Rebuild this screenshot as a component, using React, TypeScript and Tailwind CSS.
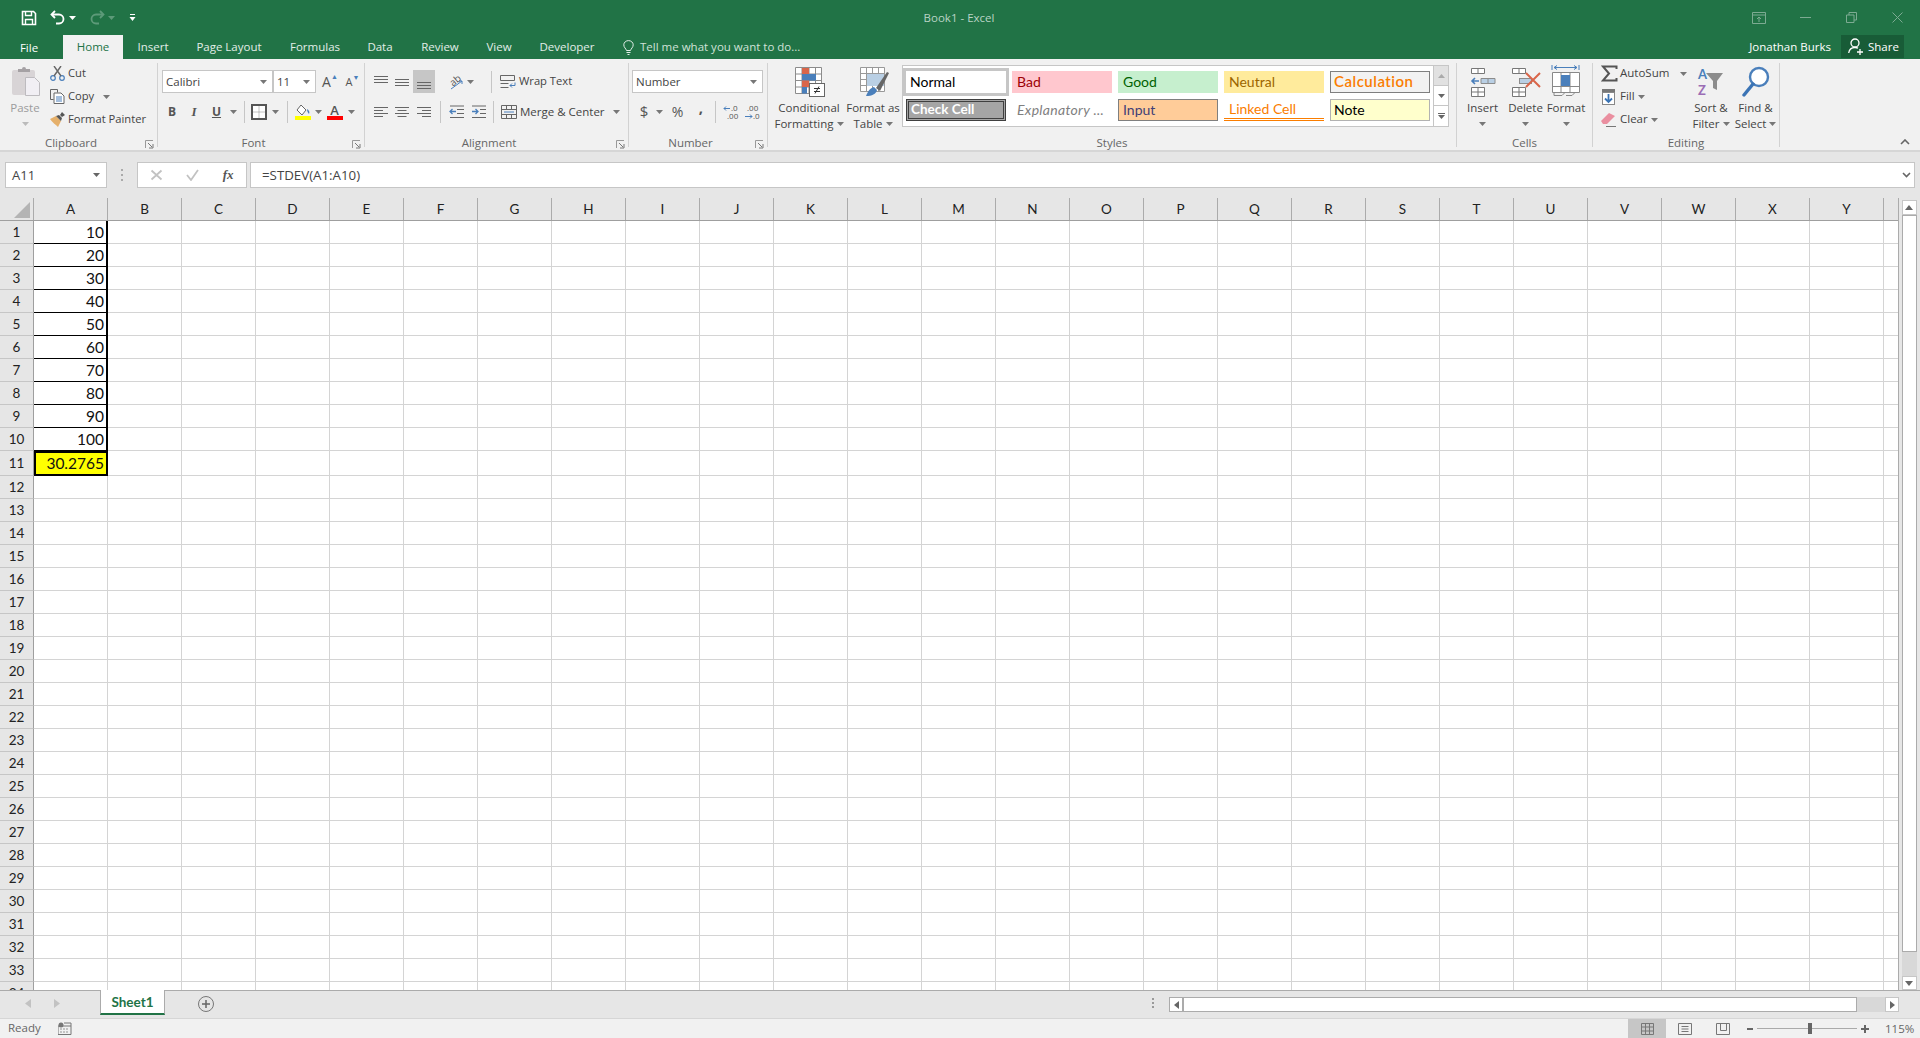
import React from "react";

const Caret = ({ c = "#777" }: { c?: string }) => (
  <svg width="7" height="4" viewBox="0 0 7 4" className="shrink-0"><path d="M0 0h7L3.5 4z" fill={c} /></svg>
);

const Lines = ({ kind }: { kind: string }) => {
  const rows: Record<string, string[]> = {
    top: ["M1 2.5h14", "M1 5.5h14", "M1 8.5h14"],
    mid: ["M1 5.5h14", "M1 8.5h14", "M1 11.5h14"],
    bot: ["M1 8.5h14", "M1 11.5h14", "M1 14.5h14"],
    left: ["M1 3.5h14", "M1 6.5h9", "M1 9.5h14", "M1 12.5h9"],
    center: ["M1 3.5h14", "M3.5 6.5h9", "M1 9.5h14", "M3.5 12.5h9"],
    right: ["M1 3.5h14", "M6 6.5h9", "M1 9.5h14", "M6 12.5h9"],
  };
  return (
    <svg width="16" height="16" viewBox="0 0 16 16">
      {rows[kind].map((d) => (
        <path key={d} d={d} stroke="#666" strokeWidth="1" fill="none" />
      ))}
    </svg>
  );
};

const Launcher = () => (
  <svg width="9" height="9" viewBox="0 0 9 9">
    <path d="M0.5 8V0.5H8" stroke="#999" fill="none" />
    <path d="M3 3l4 4M4 8h4V4" stroke="#777" fill="none" />
  </svg>
);

const Sep = () => <div className="w-px h-[22px] bg-[#c6c6c6] shrink-0" />;

const Group = ({ w, label, launcher, children }: { w: string; label: string; launcher?: boolean; children: React.ReactNode }) => (
  <div className={`${w} h-[84px] shrink-0 flex flex-col border-r border-[#d2d2d2]`}>
    <div className="h-[73px] shrink-0">{children}</div>
    <div className="h-[11px] flex text-[#666] leading-[14px]">
      <span className="flex-1 text-center">{label}</span>
      {launcher && (
        <span className="w-[15px] h-[14px] flex items-center justify-center pt-[2px]">
          <Launcher />
        </span>
      )}
    </div>
  </div>
);

const SmallRow = ({ icon, text, caret }: { icon: React.ReactNode; text: string; caret?: boolean }) => (
  <div className="h-[23px] flex items-center">
    <div className="w-[15px] mr-[3px] flex justify-center shrink-0">{icon}</div>
    <span className="whitespace-nowrap pb-[1px] text-[11.2px]">{text}</span>
    {caret && <span className="ml-[9px]"><Caret /></span>}
  </div>
);

const BigBtn = ({ w, icon, l1, l2 }: { w: string; icon: React.ReactNode; l1: string; l2?: string }) => (
  <div className={`${w} shrink-0 flex flex-col items-center`}>
    <div className="h-[37px] flex items-center justify-center">{icon}</div>
    <div className="h-[16px] leading-[16px] whitespace-nowrap">{l1}</div>
    <div className="h-[16px] leading-[16px] whitespace-nowrap flex items-center gap-[3px]">
      {l2 && <span>{l2}</span>}
      <Caret />
    </div>
  </div>
);

const Combo = ({ w, text }: { w: string; text: string }) => (
  <div className={`${w} h-[23px] bg-white border border-[#c6c6c6] flex items-center justify-between pl-[3px] pr-[5px] shrink-0`}>
    <span>{text}</span>
    <Caret />
  </div>
);

const Chip = ({ cls, text, pad = "pl-[5px] pb-[2px]", size = "text-[14px]" }: { cls: string; text: string; pad?: string; size?: string }) => (
  <div className={`${cls} ${pad} ${size} flex items-center font-['Lato'] overflow-hidden whitespace-nowrap`}>{text}</div>
);

const COLS = "ABCDEFGHIJKLMNOPQRSTUVWXY".split("");
const ROWS = Array.from({ length: 34 }, (_, i) => i + 1);
const VALUES: Record<number, string> = { 1: "10", 2: "20", 3: "30", 4: "40", 5: "50", 6: "60", 7: "70", 8: "80", 9: "90", 10: "100", 11: "30.2765" };

export default function App() {
  return (
    <div className="w-[1920px] h-[1038px] overflow-hidden flex flex-col font-['Open_Sans',sans-serif] text-[11.5px] text-[#444] bg-[#e6e6e6]">
      {/* Title bar */}
      <div className="h-[35px] shrink-0 bg-[#217346] grid grid-cols-[1fr_auto_1fr] items-center">
        <div className="flex items-center">
          <div className="w-[21px]" />
          <svg width="16" height="16" viewBox="0 0 16 16">
            <path d="M1.5 1.5h11l2 2v11h-13z" fill="none" stroke="#fff" strokeWidth="1.6" />
            <path d="M4.5 1.5v4h6v-4M4.5 14.5v-5h7v5" fill="none" stroke="#fff" strokeWidth="1.4" />
          </svg>
          <div className="w-[13px]" />
          <svg width="16" height="15" viewBox="0 0 16 15">
            <path d="M5 1L1.5 4.5 5 8" fill="none" stroke="#fff" strokeWidth="1.8" />
            <path d="M2 4.5h7a4.5 4.5 0 0 1 0 9H6" fill="none" stroke="#fff" strokeWidth="1.8" />
          </svg>
          <span className="ml-[3px]"><Caret c="#fff" /></span>
          <div className="w-[13px]" />
          <svg width="16" height="15" viewBox="0 0 16 15">
            <path d="M11 1l3.5 3.5L11 8" fill="none" stroke="#5d9a79" strokeWidth="1.8" />
            <path d="M14 4.5H7a4.5 4.5 0 0 0 0 9h3" fill="none" stroke="#5d9a79" strokeWidth="1.8" />
          </svg>
          <span className="ml-[3px]"><Caret c="#5d9a79" /></span>
          <div className="w-[14px]" />
          <svg width="7" height="8" viewBox="0 0 7 8"><path d="M1 0.5h5" stroke="#fff" /><path d="M0.5 3h6L3.5 7z" fill="#fff" /></svg>
        </div>
        <div className="text-[#b9d3c5] pr-[2px]">Book1 - Excel</div>
        <div className="flex justify-end items-center">
          <div className="w-[46px] flex justify-center">
            <svg width="14" height="12" viewBox="0 0 14 12"><path d="M.5.5h13v11H.5zM.5 3h13M7 10V5M5 7l2-2 2 2" fill="none" stroke="#7dab92" /></svg>
          </div>
          <div className="w-[46px] flex justify-center"><div className="w-[11px] h-px bg-[#7dab92]" /></div>
          <div className="w-[46px] flex justify-center">
            <svg width="11" height="11" viewBox="0 0 11 11"><path d="M.5 3h7.5v7.5H.5zM3 3V.5h7.5V8H8" fill="none" stroke="#7dab92" /></svg>
          </div>
          <div className="w-[46px] flex justify-center">
            <svg width="11" height="11" viewBox="0 0 11 11"><path d="M.5.5l10 10M10.5.5l-10 10" fill="none" stroke="#7dab92" /></svg>
          </div>
        </div>
      </div>

      {/* Tabs */}
      <div className="h-[24px] shrink-0 bg-[#217346] flex text-white text-[11.5px] items-stretch">
        <div className="w-[58px] mr-[5px] flex items-center justify-center pt-[2px]">File</div>
        <div className="w-[60px] flex items-center justify-center bg-[#f1f1f1] text-[#217346]">Home</div>
        <div className="w-[60px] flex items-center justify-center text-[#e2eee8]">Insert</div>
        <div className="w-[92px] flex items-center justify-center text-[#e2eee8]">Page Layout</div>
        <div className="w-[80px] flex items-center justify-center text-[#e2eee8]">Formulas</div>
        <div className="w-[50px] flex items-center justify-center text-[#e2eee8]">Data</div>
        <div className="w-[70px] flex items-center justify-center text-[#e2eee8]">Review</div>
        <div className="w-[48px] flex items-center justify-center text-[#e2eee8]">View</div>
        <div className="w-[88px] flex items-center justify-center text-[#e2eee8]">Developer</div>
        <div className="w-[12px]" />
        <div className="flex items-center text-[#d0e2d8]">
          <svg width="11" height="15" viewBox="0 0 11 15" className="mr-[6px]">
            <path d="M3.5 10.5C3 8.5.8 7.5.8 4.8a4.7 4.2 0 0 1 9.4 0c0 2.7-2.2 3.7-2.7 5.7zM3.5 12.5h4M4.5 14.5h2" fill="none" stroke="#e2eee8" />
          </svg>
          Tell me what you want to do...
        </div>
        <div className="flex-1" />
        <div className="flex items-center mr-[10px] text-white">Jonathan Burks</div>
        <div className="w-[63px] h-[23px] mr-[16px] bg-[#185c37] flex items-center pl-[7px] text-white">
          <svg width="16" height="17" viewBox="0 0 16 17" className="mr-[4px]">
            <circle cx="7" cy="5" r="4" fill="none" stroke="#fff" strokeWidth="1.3" />
            <path d="M.7 15c.5-3.5 3-5.5 6.3-5.5 1.2 0 2 .2 3 .7M12 11v6M9 14h6" fill="none" stroke="#fff" strokeWidth="1.3" />
          </svg>
          Share
        </div>
      </div>

      {/* Ribbon */}
      <div className="h-[93px] shrink-0 bg-[#f1f1f1] border-b-2 border-[#d6d6d6] pt-[4px] flex">
        <Group w="w-[158px]" label="Clipboard" launcher>
          <div className="flex">
            <div className="w-[50px] flex flex-col items-center text-[#9c9c9c]">
              <div className="h-[37px] pt-[3px] pl-[2px]">
                <svg width="30" height="30" viewBox="0 0 30 30">
                  <rect x="1" y="4" width="23" height="25" rx="2" fill="#d8d4d6" />
                  <path d="M7 5V3h4a2 2 0 0 1 4 0h4v3H7z" fill="#a5a1a4" />
                  <path d="M14.5 11.5h9l5 5v13h-14z" fill="#f1eff4" stroke="#bdbbbf" />
                </svg>
              </div>
              <div className="h-[16px] leading-[16px]">Paste</div>
              <div className="h-[16px] flex items-center"><Caret c="#bbb" /></div>
            </div>
            <div className="flex flex-col -mt-[1px]">
              <SmallRow
                text="Cut"
                icon={
                  <svg width="15" height="15" viewBox="0 0 15 15">
                    <circle cx="3" cy="12" r="2.3" fill="none" stroke="#4a7fbb" strokeWidth="1.2" />
                    <circle cx="12" cy="12" r="2.3" fill="none" stroke="#4a7fbb" strokeWidth="1.2" />
                    <path d="M4 10L11 0M11 10L4 0" stroke="#666" strokeWidth="1.4" fill="none" />
                  </svg>
                }
              />
              <SmallRow
                text="Copy"
                caret
                icon={
                  <svg width="15" height="15" viewBox="0 0 15 15">
                    <path d="M.5.5h7v3M.5.5v10h3" fill="none" stroke="#666" />
                    <path d="M4 4h7l3 3v7.5H4z" fill="#fff" stroke="#666" />
                    <path d="M6 8h6M6 10h6M6 12h6" stroke="#4a7fbb" />
                  </svg>
                }
              />
              <SmallRow
                text="Format Painter"
                icon={
                  <svg width="15" height="15" viewBox="0 0 15 15">
                    <path d="M0 7l6-3 5 5-3 6C6 13 2 10 0 7z" fill="#e5b06b" />
                    <path d="M6 4l3-1 3 3-1 3zM10 3l2-3 3 3-3 2z" fill="#555" />
                  </svg>
                }
              />
            </div>
          </div>
        </Group>

        <Group w="w-[207px]" label="Font" launcher>
          <div className="flex flex-col pt-[7px]">
            <div className="flex items-center pl-[4px] h-[23px]">
              <Combo w="w-[111px]" text="Calibri" />
              <Combo w="w-[43px]" text="11" />
              <div className="w-[21px] flex justify-center text-[14px] leading-[20px] text-[#555] items-start">
                A<span className="w-0 text-[7px] text-[#4a7fbb] leading-[10px]">▲</span>
              </div>
              <div className="w-[24px] flex justify-center text-[11px] leading-[16px] text-[#555] items-end">
                A<span className="w-0 text-[7px] text-[#4a7fbb] leading-[8px] self-start">▼</span>
              </div>
            </div>
            <div className="flex items-center h-[23px] mt-[7px] pl-[3px]">
              <div className="w-[22px] text-center font-bold text-[12px] text-[#555]">B</div>
              <div className="w-[22px] text-center italic font-['Liberation_Serif'] font-bold text-[13px] text-[#555]">I</div>
              <div className="w-[23px] text-center underline font-bold text-[12px] text-[#555]">U</div>
              <div className="w-[10px] flex justify-center"><Caret /></div>
              <div className="w-[6px]" />
              <Sep />
              <div className="w-[3px]" />
              <div className="w-[22px] flex justify-center">
                <svg width="16" height="16" viewBox="0 0 16 16">
                  <rect x="1" y="1" width="14" height="14" fill="#fff" stroke="#555" strokeWidth="2" />
                  <path d="M8 2.5v11M2.5 8h11" stroke="#888" strokeDasharray="1 1" />
                </svg>
              </div>
              <div className="w-[11px] flex justify-center"><Caret /></div>
              <div className="w-[6px]" />
              <Sep />
              <div className="w-[6px]" />
              <div className="w-[17px] flex flex-col items-center">
                <svg width="16" height="12" viewBox="0 0 16 12">
                  <path d="M6 1l5 5-4 5-5-5z" fill="#fff" stroke="#666" />
                  <path d="M12 5c2 1 3 3 2 5-1-1-2-3-2-5z" fill="#4a7fbb" />
                </svg>
                <div className="w-[16px] h-[4px] bg-[#ffff00]" />
              </div>
              <div className="w-[14px] flex justify-center"><Caret /></div>
              <div className="w-[19px] flex flex-col items-center">
                <span className="text-[13px] leading-[12px] text-[#555] font-semibold">A</span>
                <div className="w-[16px] h-[4px] bg-[#ff0000]" />
              </div>
              <div className="w-[14px] flex justify-center"><Caret /></div>
            </div>
          </div>
        </Group>

        <Group w="w-[264px]" label="Alignment" launcher>
          <div className="flex flex-col pt-[7px]">
            <div className="flex h-[23px] items-center pl-[5px]">
              <div className="w-[21px] flex justify-center"><Lines kind="top" /></div>
              <div className="w-[22px] flex justify-center"><Lines kind="mid" /></div>
              <div className="w-[22px] h-[23px] flex items-center justify-center bg-[#c6c6c6]"><Lines kind="bot" /></div>
              <div className="w-[11px]" />
              <div className="w-[18px] h-[18px] grid items-center justify-items-center">
                <span className="col-start-1 row-start-1 rotate-[-40deg] text-[10px] leading-[10px] text-[#555] -mt-[3px]">ab</span>
                <svg width="18" height="18" viewBox="0 0 18 18" className="col-start-1 row-start-1">
                  <path d="M5 16l11-8M16 11V8h-3" stroke="#4a7fbb" fill="none" />
                </svg>
              </div>
              <div className="w-[12px] flex justify-center"><Caret /></div>
              <div className="w-[15px]" />
              <Sep />
              <div className="w-[8px]" />
              <svg width="16" height="16" viewBox="0 0 16 16">
                <path d="M.5 1.5h14v5H.5zM.5 9.5h8M.5 13.5h8" fill="none" stroke="#666" />
                <path d="M15 8.5v3h-5M12 9.5l-2 2 2 2" fill="none" stroke="#4a7fbb" />
              </svg>
              <span className="ml-[3px] text-[11.2px]">Wrap Text</span>
            </div>
            <div className="flex h-[23px] items-center pl-[5px] mt-[7px]">
              <div className="w-[21px] flex justify-center"><Lines kind="left" /></div>
              <div className="w-[22px] flex justify-center"><Lines kind="center" /></div>
              <div className="w-[22px] flex justify-center"><Lines kind="right" /></div>
              <div className="w-[5px]" />
              <Sep />
              <div className="w-[5px]" />
              <div className="w-[22px] flex justify-center">
                <svg width="16" height="14" viewBox="0 0 16 14">
                  <path d="M1 1h14M8 4.5h7M8 8.5h7M1 12.5h14" stroke="#666" fill="none" />
                  <path d="M1 6.5h6M3.5 4l-2.5 2.5L3.5 9" stroke="#4a7fbb" strokeWidth="1.3" fill="none" />
                </svg>
              </div>
              <div className="w-[22px] flex justify-center">
                <svg width="16" height="14" viewBox="0 0 16 14">
                  <path d="M1 1h14M9 4.5h6M9 8.5h6M1 12.5h14" stroke="#666" fill="none" />
                  <path d="M1 6.5h6M4.500 4L7 6.5 4.500 9" stroke="#4a7fbb" strokeWidth="1.3" fill="none" />
                </svg>
              </div>
              <div className="w-[3px]" />
              <Sep />
              <div className="w-[7px]" />
              <svg width="16" height="16" viewBox="0 0 16 16">
                <path d="M.5 1.5h15v13H.5zM.5 5.5h15M.5 10.5h15M5.5 1.5v4M10.5 1.5v4M5.5 10.5v4M10.5 10.5v4" fill="none" stroke="#666" />
                <path d="M3 8h10" stroke="#4a7fbb" />
              </svg>
              <span className="ml-[3px]">Merge &amp; Center</span>
              <span className="ml-[8px]"><Caret /></span>
            </div>
          </div>
        </Group>

        <Group w="w-[139px]" label="Number" launcher>
          <div className="flex flex-col pt-[7px]">
            <div className="flex h-[23px] pl-[3px]"><Combo w="w-[131px]" text="Number" /></div>
            <div className="flex h-[23px] items-center mt-[7px] pl-[3px]">
              <div className="w-[24px] text-center text-[15px] text-[#555]">$</div>
              <div className="w-[7px] flex justify-center"><Caret /></div>
              <div className="w-[29px] text-center text-[14px] text-[#555]">%</div>
              <div className="w-[18px] text-center text-[15px] leading-[15px] font-bold text-[#555] pb-[8px]">,</div>
              <div className="w-[5px]" />
              <Sep />
              <div className="w-[4px]" />
              <div className="w-[22px] flex justify-center">
                <svg width="17" height="16" viewBox="0 0 17 16" className="overflow-visible">
                  <text x="8" y="7" fontSize="8" fontFamily="Open Sans" fill="#555">.0</text>
                  <text x="4" y="15" fontSize="8" fontFamily="Open Sans" fill="#555">.00</text>
                  <path d="M7 4.500H1M3 2.500l-2 2 2 2" fill="none" stroke="#4a7fbb" />
                </svg>
              </div>
              <div className="w-[19px] flex justify-center">
                <svg width="17" height="16" viewBox="0 0 17 16" className="overflow-visible">
                  <text x="4" y="7" fontSize="8" fontFamily="Open Sans" fill="#555">.00</text>
                  <text x="10" y="15" fontSize="8" fontFamily="Open Sans" fill="#555">.0</text>
                  <path d="M2 12.500h7M7 10.500l2 2-2 2" fill="none" stroke="#4a7fbb" />
                </svg>
              </div>
            </div>
          </div>
        </Group>

        <Group w="w-[689px]" label="Styles">
          <div className="flex">
            <div className="w-[5px]" />
            <BigBtn
              w="w-[72px]"
              l1="Conditional"
              l2="Formatting"
              icon={
                <svg width="30" height="31" viewBox="0 0 30 31" className="ml-[2px]">
                  <path d="M.5 1.5h26v26H.5zM.5 8h26M.5 14.5h26M.5 21h26M7 1.5v26M14 1.5v26M20.5 1.5v26" fill="#fff" stroke="#8c8c8c" />
                  <rect x="7" y="2" width="7" height="6" fill="#d9664a" />
                  <rect x="7" y="8" width="14" height="6.5" fill="#4a7fbb" />
                  <rect x="7" y="14.5" width="7" height="6.5" fill="#d9664a" />
                  <rect x="7" y="21" width="5" height="6.5" fill="#4a7fbb" />
                  <rect x="14.5" y="17.5" width="15" height="13" fill="#fff" stroke="#666" />
                  <path d="M19 22.5h6M19 25.5h6M24 20.5l-4 7" stroke="#333" fill="none" />
                </svg>
              }
            />
            <BigBtn
              w="w-[56px]"
              l1="Format as"
              l2="Table"
              icon={
                <svg width="30" height="31" viewBox="0 0 30 31" className="ml-[2px]">
                  <path d="M1.5 1.5h24v24h-24zM1.5 7.5h24M1.5 13.5h24M1.5 19.5h24M7.5 1.5v24M13.5 1.5v24M19.5 1.5v24" fill="#fff" stroke="#999" />
                  <rect x="8" y="8" width="17" height="12" fill="#b9cfe4" />
                  <path d="M7 30c2-5 4-8 8-9l3 3c-1 4-5 6-11 6z" fill="#4a7fbb" />
                  <path d="M17 22L28 6l2 1-9 18z" fill="#666" />
                </svg>
              }
            />
            <div className="w-[1px]" />
            <div className="w-[547px] h-[62px] mt-[2px] bg-white border border-[#c6c6c6] flex">
              <div className="w-[106px] flex flex-col items-center pt-[2px]">
                <Chip cls="w-[106px] h-[28px] border-[3px] border-[#c6c6c6] bg-white text-black" text="Normal" pad="pl-[4px] pb-[2px]" />
                <Chip cls="w-[100px] h-[22px] mt-[3px] bg-[#a5a5a5] border-[3px] border-double border-[#3f3f3f] text-white font-bold" text="Check Cell" size="text-[13.5px]" pad="pl-[2px] pb-[1px]" />
              </div>
              <div className="w-[3px]" />
              <div className="w-[100px] flex flex-col pt-[5px]">
                <Chip cls="w-[100px] h-[22px] bg-[#ffc7ce] text-[#9c0006]" text="Bad" />
                <Chip cls="w-[100px] h-[22px] mt-[6px] bg-white text-[#7f7f7f] italic tracking-[0.3px]" text="Explanatory ..." />
              </div>
              <div className="w-[6px]" />
              <div className="w-[100px] flex flex-col pt-[5px]">
                <Chip cls="w-[100px] h-[22px] bg-[#c6efce] text-[#006100]" text="Good" />
                <Chip cls="w-[100px] h-[22px] mt-[6px] bg-[#ffcc99] border border-[#7f7f7f] text-[#3f3f76]" text="Input" pad="pl-[4px] pb-[2px]" />
              </div>
              <div className="w-[6px]" />
              <div className="w-[100px] flex flex-col pt-[5px]">
                <Chip cls="w-[100px] h-[22px] bg-[#ffeb9c] text-[#9c6500]" text="Neutral" />
                <Chip cls="w-[100px] h-[22px] mt-[6px] bg-white border-b-[3px] border-double border-[#fa7d00] text-[#fa7d00]" text="Linked Cell" pad="pl-[5px]" />
              </div>
              <div className="w-[6px]" />
              <div className="w-[100px] flex flex-col pt-[5px]">
                <Chip cls="w-[100px] h-[22px] bg-[#f2f2f2] border border-[#7f7f7f] text-[#fa7d00] font-semibold tracking-[0.5px]" text="Calculation" size="text-[15px]" pad="pl-[3px] pb-[2px]" />
                <Chip cls="w-[100px] h-[22px] mt-[6px] bg-[#ffffcc] border border-[#b2b2b2] text-black" text="Note" pad="pl-[3px] pb-[2px]" />
              </div>
              <div className="flex-1" />
              <div className="w-[15px] flex flex-col border-l border-[#c6c6c6]">
                <div className="h-[20px] bg-[#e1e1e1] flex items-center justify-center border-b border-[#c6c6c6]">
                  <svg width="7" height="4" viewBox="0 0 7 4"><path d="M0 4h7L3.5 0z" fill="#aaa" /></svg>
                </div>
                <div className="h-[20px] flex items-center justify-center border-b border-[#c6c6c6]"><Caret c="#666" /></div>
                <div className="flex-1 flex flex-col items-center justify-center gap-[1px]">
                  <div className="w-[7px] h-px bg-[#666]" />
                  <Caret c="#666" />
                </div>
              </div>
            </div>
          </div>
        </Group>

        <Group w="w-[136px]" label="Cells">
          <div className="flex">
            <div className="w-[2px]" />
            <BigBtn
              w="w-[47px]"
              l1="Insert"
              icon={
                <svg width="26" height="32" viewBox="0 0 26 32">
                  <path d="M1.5 2.5h13v5h-13zM8 2.5v5M1.5 21.5h13v9h-13zM1.5 26h13M8 21.5v9" fill="#fff" stroke="#777" />
                  <path d="M11 12.5h14v5H11zM18 12.5v5" fill="#b9cfe4" stroke="#8c8c8c" />
                  <path d="M9 15H2M5 12l-3 3 3 3" fill="none" stroke="#4a7fbb" strokeWidth="1.6" />
                </svg>
              }
            />
            <BigBtn
              w="w-[39px]"
              l1="Delete"
              icon={
                <svg width="30" height="32" viewBox="0 0 30 32">
                  <path d="M1.5 2.5h13v5h-13zM8 2.5v5M1.5 21.5h13v9h-13zM1.5 26h13M8 21.5v9" fill="#fff" stroke="#777" />
                  <rect x="8.5" y="12.5" width="12" height="5" fill="#b9cfe4" stroke="#8c8c8c" />
                  <path d="M15 7l14 14M29 7L15 21" stroke="#d9664a" strokeWidth="2" fill="none" />
                </svg>
              }
            />
            <BigBtn
              w="w-[42px]"
              l1="Format"
              icon={
                <svg width="30" height="36" viewBox="0 0 30 36">
                  <path d="M1 1v5M28 1v5M3 3.5h23M6 1.5L3 3.5l3 2M23 1.5l3 2-3 2" fill="none" stroke="#4a7fbb" />
                  <path d="M1.5 8.5h27v20h-27zM10 8.5v20M19 8.5v20M1.5 22.5h27" fill="#fff" stroke="#888" />
                  <rect x="10" y="11" width="9" height="11" fill="#4a7fbb" />
                  <path d="M3 28.5v3h8l3-3M15 31.5h6l3-3" fill="none" stroke="#888" />
                </svg>
              }
            />
          </div>
        </Group>

        <Group w="w-[187px]" label="Editing">
          <div className="flex">
            <div className="w-[96px] flex flex-col pl-[8px] -mt-[1px]">
              <div className="h-[23px] flex items-center">
                <svg width="17" height="17" viewBox="0 0 17 17" className="mr-[2px]">
                  <path d="M15.5 4V1.5H2L8 8.5l-6 7h13.5V13" fill="none" stroke="#555" strokeWidth="2" />
                </svg>
                <span className="pb-[1px]">AutoSum</span>
                <span className="ml-[11px]"><Caret /></span>
              </div>
              <div className="h-[23px] flex items-center">
                <svg width="15" height="17" viewBox="0 0 15 17" className="mr-[4px]">
                  <rect x="1" y="1" width="13" height="4" fill="#777" />
                  <rect x="1.5" y="4.5" width="12" height="12" fill="#fff" stroke="#888" />
                  <path d="M7.5 6v8M4 10.5l3.5 3.5 3.5-3.5" fill="none" stroke="#3b74b5" strokeWidth="1.8" />
                </svg>
                <span className="pb-[1px]">Fill</span>
                <span className="ml-[3px]"><Caret /></span>
              </div>
              <div className="h-[23px] flex items-center">
                <svg width="15" height="15" viewBox="0 0 15 15" className="mr-[4px]">
                  <path d="M0 9l8-8 6 3-8 8H2z" fill="#ea8fa0" />
                  <path d="M5 14.5h10" stroke="#777" />
                </svg>
                <span className="pb-[1px]">Clear</span>
                <span className="ml-[3px]"><Caret /></span>
              </div>
            </div>
            <div className="w-[44px] flex flex-col items-center">
              <div className="h-[37px] flex items-center">
                <div className="flex flex-col text-[13px] leading-[16px] font-bold font-['Lato']">
                  <span className="text-[#4a7fbb]">A</span>
                  <span className="text-[#9b6db5]">Z</span>
                </div>
                <svg width="18" height="19" viewBox="0 0 18 19" className="-ml-[1px]">
                  <path d="M0 1h17l-6 8v9l-4-2V9z" fill="#8c8c8c" />
                </svg>
              </div>
              <div className="h-[16px] leading-[16px] whitespace-nowrap">Sort &amp;</div>
              <div className="h-[16px] leading-[16px] whitespace-nowrap flex items-center gap-[3px]">Filter<Caret /></div>
            </div>
            <div className="w-[45px] flex flex-col items-center">
              <div className="h-[37px] flex items-center">
                <svg width="28" height="32" viewBox="0 0 28 32">
                  <circle cx="17" cy="11" r="9" fill="#fff" stroke="#4a7fbb" strokeWidth="2.4" />
                  <path d="M11 18L2 29" stroke="#3b74b5" strokeWidth="3.4" strokeLinecap="round" />
                </svg>
              </div>
              <div className="h-[16px] leading-[16px] whitespace-nowrap">Find &amp;</div>
              <div className="h-[16px] leading-[16px] whitespace-nowrap flex items-center gap-[3px]">Select<Caret /></div>
            </div>
          </div>
        </Group>

        <div className="flex-1 flex flex-col justify-end items-end h-[84px] pr-[10px] pb-[2px]">
          <svg width="10" height="6" viewBox="0 0 10 6"><path d="M1 5l4-4 4 4" fill="none" stroke="#666" strokeWidth="1.6" /></svg>
        </div>
      </div>

      {/* Formula bar */}
      <div className="h-[46px] shrink-0 bg-[#e6e6e6] pt-[10px] flex items-start text-[13px]">
        <div className="w-[102px] h-[26px] ml-[5px] bg-white border border-[#c6c6c6] flex items-center justify-between pl-[6px] pr-[6px]">
          <span className="pt-[1px]">A11</span>
          <Caret c="#666" />
        </div>
        <div className="w-[30px] h-[26px] flex justify-center items-center pr-[1px]">
          <div className="flex flex-col gap-[3px]">
            <div className="w-[2px] h-[2px] bg-[#aaa]" />
            <div className="w-[2px] h-[2px] bg-[#aaa]" />
            <div className="w-[2px] h-[2px] bg-[#aaa]" />
          </div>
        </div>
        <div className="w-[110px] h-[26px] bg-white border border-[#c6c6c6] flex items-center">
          <div className="w-[36px] ml-[1px] flex justify-center">
            <svg width="13" height="12" viewBox="0 0 13 12"><path d="M1.5 1.5l10 9M11.5 1.5l-10 9" stroke="#c2c2c2" strokeWidth="1.8" fill="none" /></svg>
          </div>
          <div className="w-[36px] flex justify-center">
            <svg width="13" height="12" viewBox="0 0 13 12"><path d="M1 6l4 5 7-10" stroke="#c2c2c2" strokeWidth="1.8" fill="none" /></svg>
          </div>
          <div className="w-[36px] flex justify-center font-['Liberation_Serif'] italic font-bold text-[13px] text-[#555]">fx</div>
        </div>
        <div className="w-[1665px] h-[26px] ml-[3px] bg-white border border-[#c6c6c6] flex items-center pl-[11px] pr-[3px] justify-between">
          <span className="pt-[1px] text-[13.3px]">=STDEV(A1:A10)</span>
          <svg width="9" height="7" viewBox="0 0 9 7"><path d="M1 1l3.5 3.5L8 1" stroke="#666" strokeWidth="1.6" fill="none" /></svg>
        </div>
      </div>

      {/* Sheet */}
      <div className="h-[792px] shrink-0 flex">
        <div className="w-[1899px] h-[792px] overflow-hidden border-r border-[#ababab] shrink-0 bg-white">
          <div className="flex h-[23px] bg-[#e6e6e6] border-b border-[#9f9f9f]">
            <div className="w-[34px] shrink-0 border-r border-[#ababab] flex items-end justify-end pr-[3px] pb-[2px]">
              <svg width="16" height="16" viewBox="0 0 16 16"><path d="M16 0v16H0z" fill="#b4b4b4" /></svg>
            </div>
            {COLS.map((c) => (
              <div key={c} className="w-[74px] shrink-0 border-r border-[#ababab] flex items-center justify-center font-['Lato'] text-[13.5px] text-[#222]">
                {c}
              </div>
            ))}
          </div>
          {ROWS.map((r) => (
            <div key={r} className={`flex ${r === 11 ? "h-[25px]" : "h-[23px]"}`}>
              <div className="w-[34px] shrink-0 bg-[#e6e6e6] border-r border-b border-r-[#9f9f9f] border-b-[#c6c6c6] flex items-center justify-center pt-[1px] font-['Lato'] text-[13.5px] text-[#222]">
                {r}
              </div>
              {r === 11 ? (
                <div className="w-[74px] shrink-0 bg-[#ffff00] border-2 border-black flex items-center justify-end pr-[2px] font-['Lato'] text-[15.5px] text-[#111]">
                  {VALUES[r]}
                </div>
              ) : r <= 10 ? (
                <div className="w-[74px] shrink-0 bg-white border-r-2 border-b border-black flex items-center justify-end pr-[2px] pt-[1px] font-['Lato'] text-[15.5px] text-[#111]">
                  {VALUES[r]}
                </div>
              ) : (
                <div className="w-[74px] shrink-0 border-r border-b border-[#d4d4d4]" />
              )}
              {COLS.slice(1).map((c) => (
                <div key={c} className="w-[74px] shrink-0 border-r border-b border-[#d4d4d4]" />
              ))}
              <div className="flex-1 border-b border-[#d4d4d4]" />
            </div>
          ))}
        </div>
        <div className="flex-1 flex flex-col items-center pt-[2px] pl-[1px] pr-[2px]">
          <div className="w-[15px] h-[15px] bg-white border border-[#c6c6c6] flex items-center justify-center">
            <svg width="8" height="5" viewBox="0 0 8 5"><path d="M0 5h8L4 0z" fill="#666" /></svg>
          </div>
          <div className="w-[15px] flex-1 bg-[#d8d8d8] flex flex-col">
            <div className="h-[737px] bg-white border border-[#ababab]" />
          </div>
          <div className="w-[15px] h-[14px] bg-white border border-[#c6c6c6] flex items-center justify-center">
            <svg width="8" height="5" viewBox="0 0 8 5"><path d="M0 0h8L4 5z" fill="#666" /></svg>
          </div>
        </div>
      </div>

      {/* Tab strip */}
      <div className="h-[28px] shrink-0 bg-[#e6e6e6] border-t border-[#ababab] flex items-start">
        <div className="w-[100px] shrink-0 h-[24px] flex items-center">
          <div className="w-[25px]" />
          <svg width="6" height="9" viewBox="0 0 6 9"><path d="M6 0v9L0 4.5z" fill="#c2c2c2" /></svg>
          <div className="w-[23px]" />
          <svg width="6" height="9" viewBox="0 0 6 9"><path d="M0 0v9l6-4.5z" fill="#c2c2c2" /></svg>
        </div>
        <div className="w-[65px] shrink-0 -mt-px h-[25px] bg-white border-x border-[#ababab] border-b-[2px] border-b-[#217346] flex items-center justify-center pt-[2px] font-['Lato'] font-bold text-[13.5px] text-[#217346]">
          Sheet1
        </div>
        <div className="w-[33px] shrink-0" />
        <div className="w-[16px] h-[16px] mt-[5px] rounded-full border-[1.5px] border-[#777] flex items-center justify-center shrink-0">
          <svg width="8" height="8" viewBox="0 0 8 8"><path d="M4 0v8M0 4h8" stroke="#666" strokeWidth="1.5" /></svg>
        </div>
        <div className="flex-1" />
        <div className="flex flex-col gap-[2px] pt-[7px] mr-[15px]">
          <div className="w-[2px] h-[2px] bg-[#999]" />
          <div className="w-[2px] h-[2px] bg-[#999]" />
          <div className="w-[2px] h-[2px] bg-[#999]" />
        </div>
        <div className="w-[14px] h-[15px] mt-[6px] bg-white border border-[#ababab] flex items-center justify-center">
          <svg width="5" height="8" viewBox="0 0 5 8"><path d="M5 0v8L0 4z" fill="#666" /></svg>
        </div>
        <div className="w-[702px] h-[15px] mt-[6px] flex bg-[#d8d8d8]">
          <div className="w-[674px] bg-white border border-[#ababab]" />
        </div>
        <div className="w-[14px] h-[15px] mt-[6px] bg-white border border-[#c6c6c6] flex items-center justify-center">
          <svg width="5" height="8" viewBox="0 0 5 8"><path d="M0 0v8l5-4z" fill="#666" /></svg>
        </div>
        <div className="w-[21px]" />
      </div>

      {/* Status bar */}
      <div className="h-[20px] shrink-0 bg-[#f1f1f1] border-t border-[#d6d6d6] flex items-center text-[#666]">
        <span className="ml-[8px] w-[50px] pb-[1px]">Ready</span>
        <svg width="14" height="13" viewBox="0 0 14 13">
          <circle cx="3" cy="3" r="2.5" fill="#777" />
          <path d="M6 1h7v3H0v8.5h13V4" fill="none" stroke="#777" />
          <path d="M3 6.5v1M6 6.5v1M9 6.5v1M3 9.5v1M6 9.5v1M9 9.5v1" stroke="#777" strokeWidth="1.5" />
        </svg>
        <div className="flex-1" />
        <div className="w-[38px] h-[19px] bg-[#c6c6c6] flex items-center justify-center">
          <svg width="13" height="12" viewBox="0 0 13 12"><path d="M.5.5h12v11H.5zM.5 4h12M.5 8h12M4.5.5v11M8.5.5v11" fill="none" stroke="#777" /></svg>
        </div>
        <div className="w-[38px] flex justify-center">
          <svg width="14" height="12" viewBox="0 0 14 12"><path d="M.5.5h13v11H.5zM3.5 3.5h7M3.5 6h7M3.5 8.5h7" fill="none" stroke="#777" /></svg>
        </div>
        <div className="w-[38px] flex justify-center">
          <svg width="14" height="12" viewBox="0 0 14 12"><path d="M.5.5h13v11H.5zM4.5.5v7h6v-7" fill="none" stroke="#777" /></svg>
        </div>
        <div className="w-[5px]" />
        <div className="w-[6px] h-[2px] bg-[#666] mr-[4px]" />
        <div className="w-[100px] h-[12px] flex items-center">
          <div className="w-[51px] h-px bg-[#aaa]" />
          <div className="w-[4px] h-[11px] bg-[#666]" />
          <div className="w-[45px] h-px bg-[#aaa]" />
        </div>
        <svg width="8" height="8" viewBox="0 0 8 8" className="ml-[4px]"><path d="M4 0v8M0 4h8" stroke="#666" strokeWidth="2" /></svg>
        <span className="ml-[16px] w-[35px] text-[#666] whitespace-nowrap">115%</span>
      </div>
    </div>
  );
}
